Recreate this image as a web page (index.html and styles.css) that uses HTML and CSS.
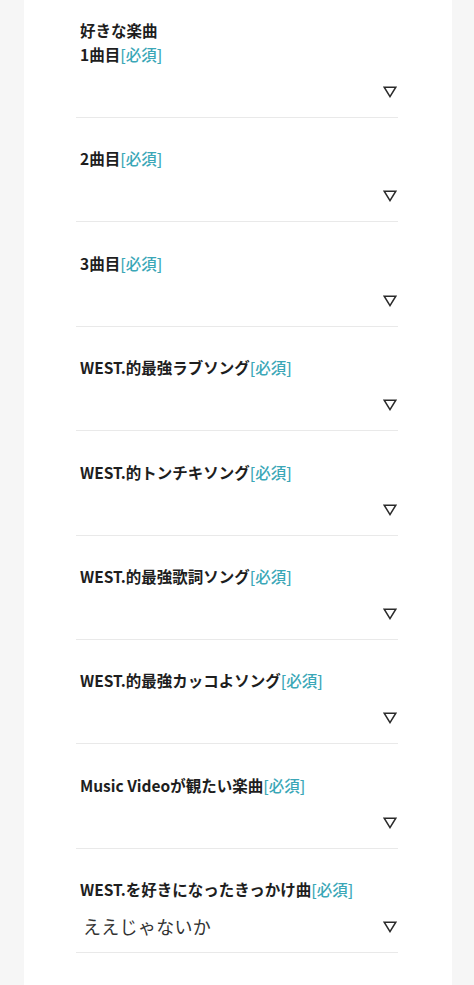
FILE: index.html
```html
<!DOCTYPE html>
<html lang="ja">
<head>
    <meta charset="UTF-8">
    <meta name="viewport" content="width=device-width, initial-scale=1.0">
    <title>アンケート</title>
    <link rel="stylesheet" href="styles.css">
</head>
<body>

    <!-- Song questions -->
    <main class="card">
        <form class="survey">

            <div class="field first">
                <label class="label">好きな楽曲<br>1曲目<span class="req">[必須]</span></label>
                <div class="select">
                    <span class="value"></span>
                    <svg class="arrow" width="14" height="12" viewBox="0 0 14 12"><path d="M1.2 1.2 H12.8 L7 10.6 Z" fill="none" stroke="#2b2b2b" stroke-width="1.5"/></svg>
                </div>
            </div>

            <div class="field">
                <label class="label">2曲目<span class="req">[必須]</span></label>
                <div class="select">
                    <span class="value"></span>
                    <svg class="arrow" width="14" height="12" viewBox="0 0 14 12"><path d="M1.2 1.2 H12.8 L7 10.6 Z" fill="none" stroke="#2b2b2b" stroke-width="1.5"/></svg>
                </div>
            </div>

            <div class="field">
                <label class="label">3曲目<span class="req">[必須]</span></label>
                <div class="select">
                    <span class="value"></span>
                    <svg class="arrow" width="14" height="12" viewBox="0 0 14 12"><path d="M1.2 1.2 H12.8 L7 10.6 Z" fill="none" stroke="#2b2b2b" stroke-width="1.5"/></svg>
                </div>
            </div>

            <div class="field">
                <label class="label">WEST.的最強ラブソング<span class="req">[必須]</span></label>
                <div class="select">
                    <span class="value"></span>
                    <svg class="arrow" width="14" height="12" viewBox="0 0 14 12"><path d="M1.2 1.2 H12.8 L7 10.6 Z" fill="none" stroke="#2b2b2b" stroke-width="1.5"/></svg>
                </div>
            </div>

            <div class="field">
                <label class="label">WEST.的トンチキソング<span class="req">[必須]</span></label>
                <div class="select">
                    <span class="value"></span>
                    <svg class="arrow" width="14" height="12" viewBox="0 0 14 12"><path d="M1.2 1.2 H12.8 L7 10.6 Z" fill="none" stroke="#2b2b2b" stroke-width="1.5"/></svg>
                </div>
            </div>

            <div class="field">
                <label class="label">WEST.的最強歌詞ソング<span class="req">[必須]</span></label>
                <div class="select">
                    <span class="value"></span>
                    <svg class="arrow" width="14" height="12" viewBox="0 0 14 12"><path d="M1.2 1.2 H12.8 L7 10.6 Z" fill="none" stroke="#2b2b2b" stroke-width="1.5"/></svg>
                </div>
            </div>

            <div class="field">
                <label class="label">WEST.的最強カッコよソング<span class="req">[必須]</span></label>
                <div class="select">
                    <span class="value"></span>
                    <svg class="arrow" width="14" height="12" viewBox="0 0 14 12"><path d="M1.2 1.2 H12.8 L7 10.6 Z" fill="none" stroke="#2b2b2b" stroke-width="1.5"/></svg>
                </div>
            </div>

            <div class="field">
                <label class="label">Music Videoが観たい楽曲<span class="req">[必須]</span></label>
                <div class="select">
                    <span class="value"></span>
                    <svg class="arrow" width="14" height="12" viewBox="0 0 14 12"><path d="M1.2 1.2 H12.8 L7 10.6 Z" fill="none" stroke="#2b2b2b" stroke-width="1.5"/></svg>
                </div>
            </div>

            <div class="field">
                <label class="label">WEST.を好きになったきっかけ曲<span class="req">[必須]</span></label>
                <div class="select">
                    <span class="value">ええじゃないか</span>
                    <svg class="arrow" width="14" height="12" viewBox="0 0 14 12"><path d="M1.2 1.2 H12.8 L7 10.6 Z" fill="none" stroke="#2b2b2b" stroke-width="1.5"/></svg>
                </div>
            </div>

        </form>
    </main>

</body>
</html>
```

FILE: styles.css
```css
body {
    margin: 0;
    padding: 0;
    background-color: #f6f6f6;
    font-family: "Noto Sans CJK JP", "Noto Sans", sans-serif;
    color: #222;
}

.card {
    margin: 0 22px 0 24px;
    min-height: 985px;
    background-color: #fff;
    padding: 18px 54px 0 52px;
    box-sizing: border-box;
}

.survey {
    display: flex;
    flex-direction: column;
}

.field {
    display: flex;
    flex-direction: column;
    margin-top: 28.4px;
    border-bottom: 1px solid #e9e9e9;
}

.field.first {
    margin-top: 0;
}

.label {
    display: block;
    padding: 0 0 1px 4px;
    font-size: 15.5px;
    font-weight: 700;
    line-height: 24px;
    color: #1e1e1e;
}

.req {
    font-weight: 500;
    color: #3ba7b7;
}

.select {
    display: flex;
    align-items: center;
    justify-content: space-between;
    height: 50px;
    padding: 0 1px 0 7px;
}

.value {
    padding-bottom: 3px;
    font-size: 18px;
    color: #333;
    letter-spacing: 0.3px;
}

.arrow {
    display: block;
}
```
